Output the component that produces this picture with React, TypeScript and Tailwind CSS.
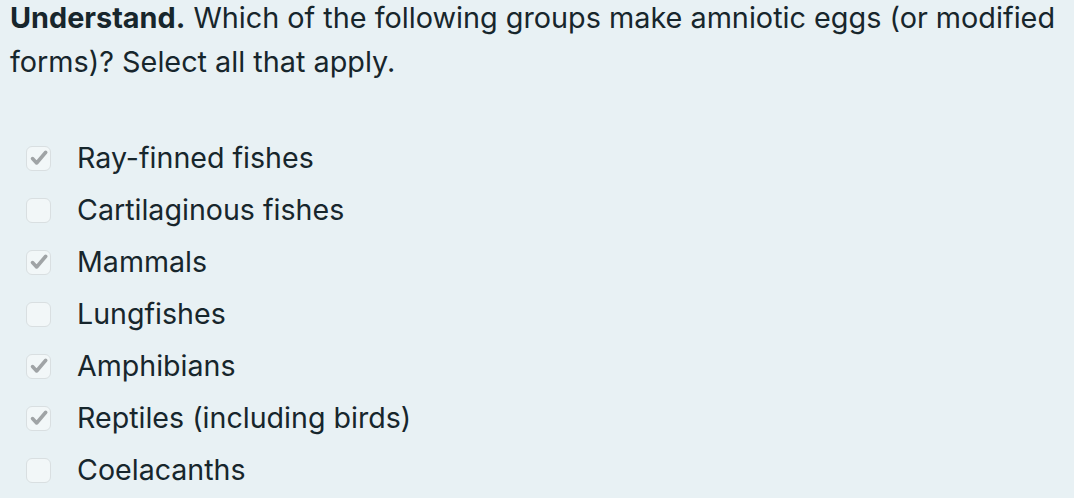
import React from "react";

const options = [
  { label: "Ray-finned fishes", checked: true },
  { label: "Cartilaginous fishes", checked: false },
  { label: "Mammals", checked: true },
  { label: "Lungfishes", checked: false },
  { label: "Amphibians", checked: true },
  { label: "Reptiles (including birds)", checked: true },
  { label: "Coelacanths", checked: false },
];

function Box({ checked }: { checked: boolean }) {
  return (
    <span className="flex h-[25px] w-[25px] shrink-0 items-center justify-center rounded-[6px] border border-[#d9dfe1] bg-[#f2f7f8]">
      {checked && (
        <svg width="20" height="20" viewBox="0 0 16 16" fill="none">
          <path d="M2.8 8.4l3.3 3.6L13.4 3.4" stroke="#a0a4a6" strokeWidth="2.8" strokeLinecap="round" strokeLinejoin="round" />
        </svg>
      )}
    </span>
  );
}

export default function App() {
  return (
    <div className="h-[498px] w-[1074px] overflow-hidden bg-[#e8f1f4] text-[#17262c]" style={{ fontFamily: "Inter, 'Liberation Sans', sans-serif" }}>
      <p className="-mt-[4px] pl-[10px] text-[28.8px] leading-[44px]">
        <b className="font-bold">Understand.</b> Which of the following groups make amniotic eggs (or modified forms)? Select all that apply.
      </p>
      <ul className="mt-[48px] flex flex-col">
        {options.map((o) => (
          <li key={o.label} className="flex h-[52px] items-center gap-[26px] pl-[26px] text-[28.6px]">
            <Box checked={o.checked} />
            <span>{o.label}</span>
          </li>
        ))}
      </ul>
    </div>
  );
}
